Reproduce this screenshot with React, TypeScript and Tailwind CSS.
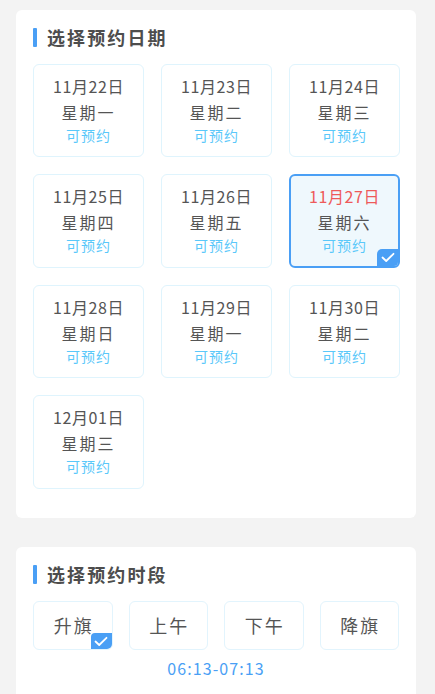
const FONT = "font-['Noto_Sans_CJK_SC','Noto_Sans',sans-serif]";

const days: [string, string][] = [
  ["11月22日", "星期一"],
  ["11月23日", "星期二"],
  ["11月24日", "星期三"],
  ["11月25日", "星期四"],
  ["11月26日", "星期五"],
  ["11月27日", "星期六"],
  ["11月28日", "星期日"],
  ["11月29日", "星期一"],
  ["11月30日", "星期二"],
  ["12月01日", "星期三"],
];

function Check({ className }: { className: string }) {
  return (
    <span className={className}>
      <svg width="14" height="11" viewBox="0 0 14 11" fill="none">
        <path d="M1.5 5.5L5.2 9L12.5 1.8" stroke="#ffffff" strokeWidth="1.8" strokeLinecap="round" strokeLinejoin="round" />
      </svg>
    </span>
  );
}

function Title({ text }: { text: string }) {
  return (
    <div className="flex h-[20px] items-center gap-[10px]">
      <span className="h-[19px] w-[4px] rounded-[1px] bg-[#4a9ff5]" />
      <span className="text-[18px] leading-[20px] font-bold tracking-[2.1px] text-[#4d4d4d]">{text}</span>
    </div>
  );
}

export default function App() {
  return (
    <div className={`${FONT} h-[694px] w-[435px] overflow-hidden bg-[#f3f3f3] px-[16px] pt-[10px]`}>
      <section className="h-[508px] w-[400px] rounded-[6px] bg-white pl-[17px] pr-[16px] pt-[17px]">
        <Title text="选择预约日期" />
        <div className="mt-[17px] grid grid-cols-[111px_111px_111px] gap-x-[17px] gap-y-[17px]">
          {days.map(([date, week]) => {
            const selected = date === "11月27日";
            return (
              <div
                key={date}
                className={
                  selected
                    ? "relative flex h-[93.4px] flex-col items-center overflow-hidden rounded-[6px] border-2 border-[#4a9ff5] bg-[#eff8fd] pt-[8px]"
                    : "relative flex h-[93.4px] flex-col items-center overflow-hidden rounded-[6px] border border-[#dff4fd] bg-white pt-[9px]"
                }
              >
                <span className={`text-[16px] leading-[24px] tracking-[0.6px] ${selected ? "text-[#ee5a5a]" : "text-[#555555]"}`}>{date}</span>
                <span className="mt-[2px] text-[16px] leading-[24px] tracking-[2px] text-[#555555]">{week}</span>
                <span className="text-[14px] leading-[22px] tracking-[1px] text-[#5ac8fa]">可预约</span>
                {selected && (
                  <Check className="absolute right-0 bottom-0 flex h-[17px] w-[21px] items-center justify-center rounded-tl-[5px] bg-[#4a9ff5]" />
                )}
              </div>
            );
          })}
        </div>
      </section>
      <section className="mt-[29px] h-[200px] w-[400px] rounded-[6px] bg-white pl-[17px] pr-[17px] pt-[17px]">
        <Title text="选择预约时段" />
        <div className="mt-[17px] grid grid-cols-4 gap-x-[16px]">
          {["升旗", "上午", "下午", "降旗"].map((label, i) => (
            <div
              key={label}
              className="relative flex h-[49px] items-center justify-center overflow-hidden rounded-[6px] border border-[#e2f4fd] bg-white pl-[2px] text-[18px] tracking-[2px] text-[#555555]"
            >
              {label}
              {i === 0 && (
                <Check className="absolute right-0 bottom-0 flex h-[16px] w-[21px] items-center justify-center rounded-tl-[4px] bg-[#4a9ff5]" />
              )}
            </div>
          ))}
        </div>
        <div className="mt-[7px] text-center text-[16px] leading-[22px] tracking-[1.1px] text-[#4a9ff5]">06:13-07:13</div>
      </section>
    </div>
  );
}
